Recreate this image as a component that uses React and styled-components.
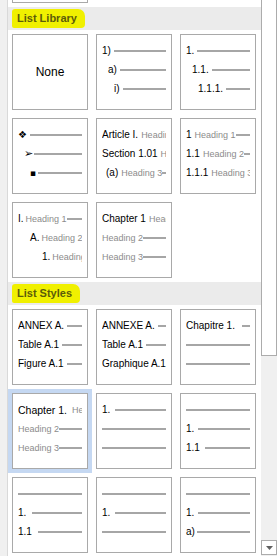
import React from 'react';
import styled, { createGlobalStyle, css } from 'styled-components';

const GlobalStyle = createGlobalStyle`
  html, body {
    margin: 0;
    padding: 0;
    background: #fff;
  }
  body {
    font-family: "Liberation Sans", Arial, sans-serif;
  }
`;

const Frame = styled.div`
  display: flex;
  width: 277px;
  height: 556px;
  overflow: hidden;
  background: #fff;
`;

const Gutter = styled.div`
  flex: none;
  width: 7px;
  background: #f0f0f0;
  border-right: 1px solid #d9d9d9;
`;

const Panel = styled.div`
  flex: none;
  width: 253px;
  overflow: hidden;
`;

// the gallery is scrolled down a little, so the top of it is cut off
const Scrolled = styled.div`
  margin-top: ${props => -props.offset}px;
`;

const Section = styled.section`
  margin-bottom: 4px;
`;

const Header = styled.div`
  display: flex;
  align-items: center;
  height: 23px;
  margin-bottom: 4px;
  padding-left: 4px;
  background: #ebebeb;
`;

const Marker = styled.span`
  display: inline-block;
  height: 19px;
  line-height: 19px;
  padding: 0 8px 0 5px;
  border-radius: 3px 7px 4px 2px;
  background: ${props => props.highlight ? '#f0f000' : 'transparent'};
  color: ${props => props.highlight ? '#5c5c0a' : '#555'};
  font-size: 11px;
  font-weight: bold;
`;

const Grid = styled.div`
  display: grid;
  grid-template-columns: repeat(3, 76px);
  grid-auto-rows: 76px;
  gap: 8px;
  padding-left: 4px;
`;

const Tile = styled.div`
  box-sizing: border-box;
  border: 1px solid #a9a9a9;
  background: #fff;
  padding: 6px 5px 0;
  box-shadow: ${props => props.selected ? '0 0 0 4px #c5d8f2' : 'none'};
  ${props => props.center && css`
    display: flex;
    align-items: center;
    justify-content: center;
    padding: 0;
    font-size: 12px;
    color: #000;
  `}
`;

const Row = styled.div`
  display: flex;
  align-items: center;
  height: 19px;
  padding-left: ${props => props.indent ?? 0}px;
  overflow: hidden;
  white-space: nowrap;
`;

const Num = styled.span`
  flex: none;
  font-size: ${props => props.size ?? 10}px;
  color: #000;
`;

const Head = styled.span`
  flex: none;
  margin-left: ${props => props.gap ?? 3}px;
  font-size: 9px;
  color: #8c8c8c;
`;

const Bullet = styled.span`
  flex: none;
  font-family: "DejaVu Sans", sans-serif;
  font-size: ${props => props.size ?? 8}px;
  color: #000;
`;

const Line = styled.span`
  flex: 1 1 auto;
  min-width: 0;
  height: 2px;
  margin-left: ${props => props.gap ?? 2}px;
  background: #a6a6a6;
`;

const Scrollbar = styled.div`
  flex: none;
  display: flex;
  flex-direction: column;
  width: 16px;
  background: #f0f0f0;
`;

const Thumb = styled.div`
  flex: none;
  box-sizing: border-box;
  height: 356px;
  border: 1px solid #acacac;
  border-top: none;
  background: #fff;
`;

const Track = styled.div`
  flex: 1;
`;

const ArrowButton = styled.div`
  flex: none;
  display: flex;
  align-items: center;
  justify-content: center;
  box-sizing: border-box;
  height: 15px;
  margin-bottom: 1px;
  border: 1px solid #acacac;
  background: #fff;
`;

const DownArrow = () => (
  <svg width="7" height="4" viewBox="0 0 7 4">
    <polygon points="0,0 7,0 3.5,4" fill="#606060" />
  </svg>
);

const FullLine = () => (
  <Row>
    <Line gap={0} />
  </Row>
);

const libraryTiles = (
  <>
    <Tile center>None</Tile>
    <Tile>
      <Row><Num>1)</Num><Line gap={3} /></Row>
      <Row indent={6}><Num>a)</Num><Line gap={3} /></Row>
      <Row indent={12}><Num>i)</Num><Line gap={3} /></Row>
    </Tile>
    <Tile>
      <Row><Num>1.</Num><Line gap={3} /></Row>
      <Row indent={6}><Num>1.1.</Num><Line gap={3} /></Row>
      <Row indent={12}><Num>1.1.1.</Num><Line gap={3} /></Row>
    </Tile>

    <Tile>
      <Row indent={0}><Bullet size={10}>❖</Bullet><Line gap={3} /></Row>
      <Row indent={6}><Bullet size={11}>➢</Bullet><Line gap={1} /></Row>
      <Row indent={12}><Bullet size={9}>▪</Bullet><Line gap={2} /></Row>
    </Tile>
    <Tile>
      <Row><Num>Article I.</Num><Head>Heading 1</Head><Line gap={0} /></Row>
      <Row><Num>Section 1.01</Num><Head>Heading 2</Head><Line gap={0} /></Row>
      <Row indent={4}><Num>(a)</Num><Head>Heading 3</Head><Line gap={0} /></Row>
    </Tile>
    <Tile>
      <Row><Num>1</Num><Head>Heading 1</Head><Line gap={0} /></Row>
      <Row><Num>1.1</Num><Head>Heading 2</Head><Line gap={0} /></Row>
      <Row><Num>1.1.1</Num><Head>Heading 3</Head><Line gap={0} /></Row>
    </Tile>

    <Tile>
      <Row><Num>I.</Num><Head gap={2}>Heading 1</Head><Line gap={0} /></Row>
      <Row indent={12}><Num>A.</Num><Head gap={2}>Heading 2</Head><Line gap={0} /></Row>
      <Row indent={24}><Num>1.</Num><Head gap={2}>Heading 3</Head><Line gap={0} /></Row>
    </Tile>
    <Tile>
      <Row><Num>Chapter 1</Num><Head>Heading 1</Head><Line gap={0} /></Row>
      <Row><Head gap={0}>Heading 2</Head><Line gap={0} /></Row>
      <Row><Head gap={0}>Heading 3</Head><Line gap={0} /></Row>
    </Tile>
  </>
);

const styleTiles = (
  <>
    <Tile>
      <Row><Num>ANNEX A.</Num><Line gap={3} /></Row>
      <Row><Num>Table A.1</Num><Line gap={3} /></Row>
      <Row><Num>Figure A.1</Num><Line gap={3} /></Row>
    </Tile>
    <Tile>
      <Row><Num>ANNEXE A.</Num><Line gap={3} /></Row>
      <Row><Num>Table A.1</Num><Line gap={3} /></Row>
      <Row><Num>Graphique A.1</Num><Line gap={3} /></Row>
    </Tile>
    <Tile>
      <Row><Num>Chapitre 1.</Num><Line gap={7} /></Row>
      <FullLine />
      <FullLine />
    </Tile>

    <Tile selected>
      <Row><Num size={10.5}>Chapter 1.</Num><Head gap={5}>Heading 1</Head><Line gap={0} /></Row>
      <Row><Head gap={0}>Heading 2</Head><Line gap={0} /></Row>
      <Row><Head gap={0}>Heading 3</Head><Line gap={0} /></Row>
    </Tile>
    <Tile>
      <Row><Num>1.</Num><Line gap={5} /></Row>
      <FullLine />
      <FullLine />
    </Tile>
    <Tile>
      <FullLine />
      <Row><Num>1.</Num><Line gap={4} /></Row>
      <Row><Num>1.1</Num><Line gap={5} /></Row>
    </Tile>

    <Tile>
      <FullLine />
      <Row><Num>1.</Num><Line gap={6} /></Row>
      <Row><Num>1.1</Num><Line gap={6} /></Row>
    </Tile>
    <Tile>
      <FullLine />
      <Row><Num>1.</Num><Line gap={5} /></Row>
      <FullLine />
    </Tile>
    <Tile>
      <FullLine />
      <Row><Num>1.</Num><Line gap={4} /></Row>
      <Row><Num>a)</Num><Line gap={2} /></Row>
    </Tile>
  </>
);

export default function App() {
  return (
    <>
      <GlobalStyle />
      <Frame>
        <Gutter />
        <Panel>
          <Scrolled offset={100}>
            <Section>
              <Header><Marker>Current List</Marker></Header>
              <Grid>
                <Tile center>None</Tile>
              </Grid>
            </Section>
            <Section>
              <Header><Marker highlight>List Library</Marker></Header>
              <Grid>{libraryTiles}</Grid>
            </Section>
            <Section>
              <Header><Marker highlight>List Styles</Marker></Header>
              <Grid>{styleTiles}</Grid>
            </Section>
          </Scrolled>
        </Panel>
        <Scrollbar>
          <Thumb />
          <Track />
          <ArrowButton>
            <DownArrow />
          </ArrowButton>
        </Scrollbar>
      </Frame>
    </>
  );
}
